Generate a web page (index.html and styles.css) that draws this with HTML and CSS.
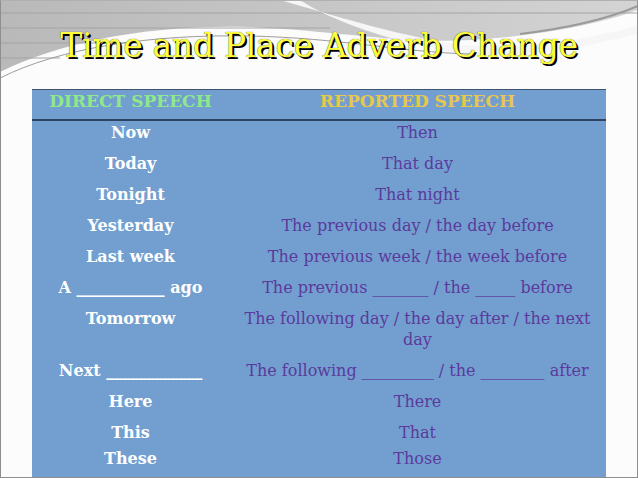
FILE: index.html
```html
<!DOCTYPE html>
<html>
<head>
<meta charset="utf-8">
<link rel="stylesheet" href="styles.css">
</head>
<body>
<div class="slide">
  <svg class="bg" width="638" height="120" viewBox="0 0 638 120" aria-hidden="true">
    <defs>
      <linearGradient id="g1" x1="0" y1="0" x2="1" y2="0">
        <stop offset="0" stop-color="#b9b9b9"/>
        <stop offset="0.5" stop-color="#c6c6c6"/>
        <stop offset="1" stop-color="#d4d4d4"/>
      </linearGradient>
    </defs>
    <path d="M0,0 H638 V10 C600,24 540,36 470,40 C400,44 330,30 250,27 C150,24 60,42 0,72 Z" fill="url(#g1)"/>
    <g stroke="#a4a4a4" stroke-width="1.2">
      <line x1="0" y1="13" x2="638" y2="13"/>
      <line x1="0" y1="28" x2="330" y2="28"/>
      <line x1="0" y1="43" x2="140" y2="43"/>
      <line x1="0" y1="58" x2="60" y2="58"/>
    </g>
    <path d="M280,0 C330,14 390,34 455,44 C520,52 580,40 638,26 V34 C580,48 520,60 455,52 C390,42 330,20 300,0 Z" fill="#f6f6f6"/>
    <path d="M0,78 C60,48 150,34 250,36 C340,38 400,52 470,54" fill="none" stroke="#9c9c9c" stroke-width="1"/>
    <path d="M520,34 C570,28 610,18 638,6" fill="none" stroke="#9a9a9a" stroke-width="2"/>
  </svg>
  <h1 class="title">Time and Place Adverb Change</h1>
  <div class="table">
    <div class="row head">
      <div class="cell left direct">DIRECT SPEECH</div>
      <div class="cell right reported">REPORTED SPEECH</div>
    </div>
    <div class="row"><div class="cell left">Now</div><div class="cell right">Then</div></div>
    <div class="row"><div class="cell left">Today</div><div class="cell right">That day</div></div>
    <div class="row"><div class="cell left">Tonight</div><div class="cell right">That night</div></div>
    <div class="row"><div class="cell left">Yesterday</div><div class="cell right">The previous day / the day before</div></div>
    <div class="row"><div class="cell left">Last week</div><div class="cell right">The previous week / the week before</div></div>
    <div class="row"><div class="cell left">A ___________ ago</div><div class="cell right">The previous _______ / the _____ before</div></div>
    <div class="row"><div class="cell left">Tomorrow</div><div class="cell right">The following day / the day after / the next day</div></div>
    <div class="row"><div class="cell left">Next ____________</div><div class="cell right">The following _________ / the ________ after</div></div>
    <div class="row"><div class="cell left">Here</div><div class="cell right">There</div></div>
    <div class="row tight"><div class="cell left">This</div><div class="cell right">That</div></div>
    <div class="row"><div class="cell left">These</div><div class="cell right">Those</div></div>
  </div>
</div>
</body>
</html>
```
FILE: styles.css
```css
html, body {
  margin: 0;
  padding: 0;
  background: #ffffff;
}
.slide {
  position: relative;
  display: flex;
  flex-direction: column;
  width: 638px;
  height: 478px;
  box-sizing: border-box;
  border: 1px solid #8e8e8e;
  border-top-color: #b0b0b0;
  background: #fcfcfc;
  overflow: hidden;
  font-family: "DejaVu Serif", "Liberation Serif", serif;
}
.bg {
  position: absolute;
  left: -1px;
  top: -1px;
}
.title {
  position: relative;
  flex: none;
  margin: 0;
  padding-top: 26px;
  height: 88px;
  box-sizing: border-box;
  text-align: center;
  font-weight: normal;
  font-size: 33px;
  letter-spacing: -0.3px;
  line-height: 38px;
  color: #ffff3c;
  text-shadow: 2px 2px 0 #000, 0 0 1px #333;
}
.table {
  position: relative;
  flex: 1;
  margin-left: 31px;
  width: 574px;
  background: #729fd0;
  border-top: 1px solid #3d5470;
}
.row {
  display: flex;
  padding: 1px 0 9px;
  line-height: 21px;
  font-size: 16px;
}
.row.tight {
  padding-bottom: 4px;
}
.row.head {
  border-bottom: 2px solid #2c4462;
  padding: 1px 0 7px;
  font-size: 17px;
}
.cell {
  text-align: center;
}
.left {
  width: 197px;
  flex: none;
  color: #ffffff;
  font-weight: bold;
}
.right {
  flex: 1;
  color: #5b3a9c;
  padding: 0 12px;
}
.direct {
  color: #8fe98a;
}
.reported {
  color: #e8c84a;
  font-weight: bold;
}
```
